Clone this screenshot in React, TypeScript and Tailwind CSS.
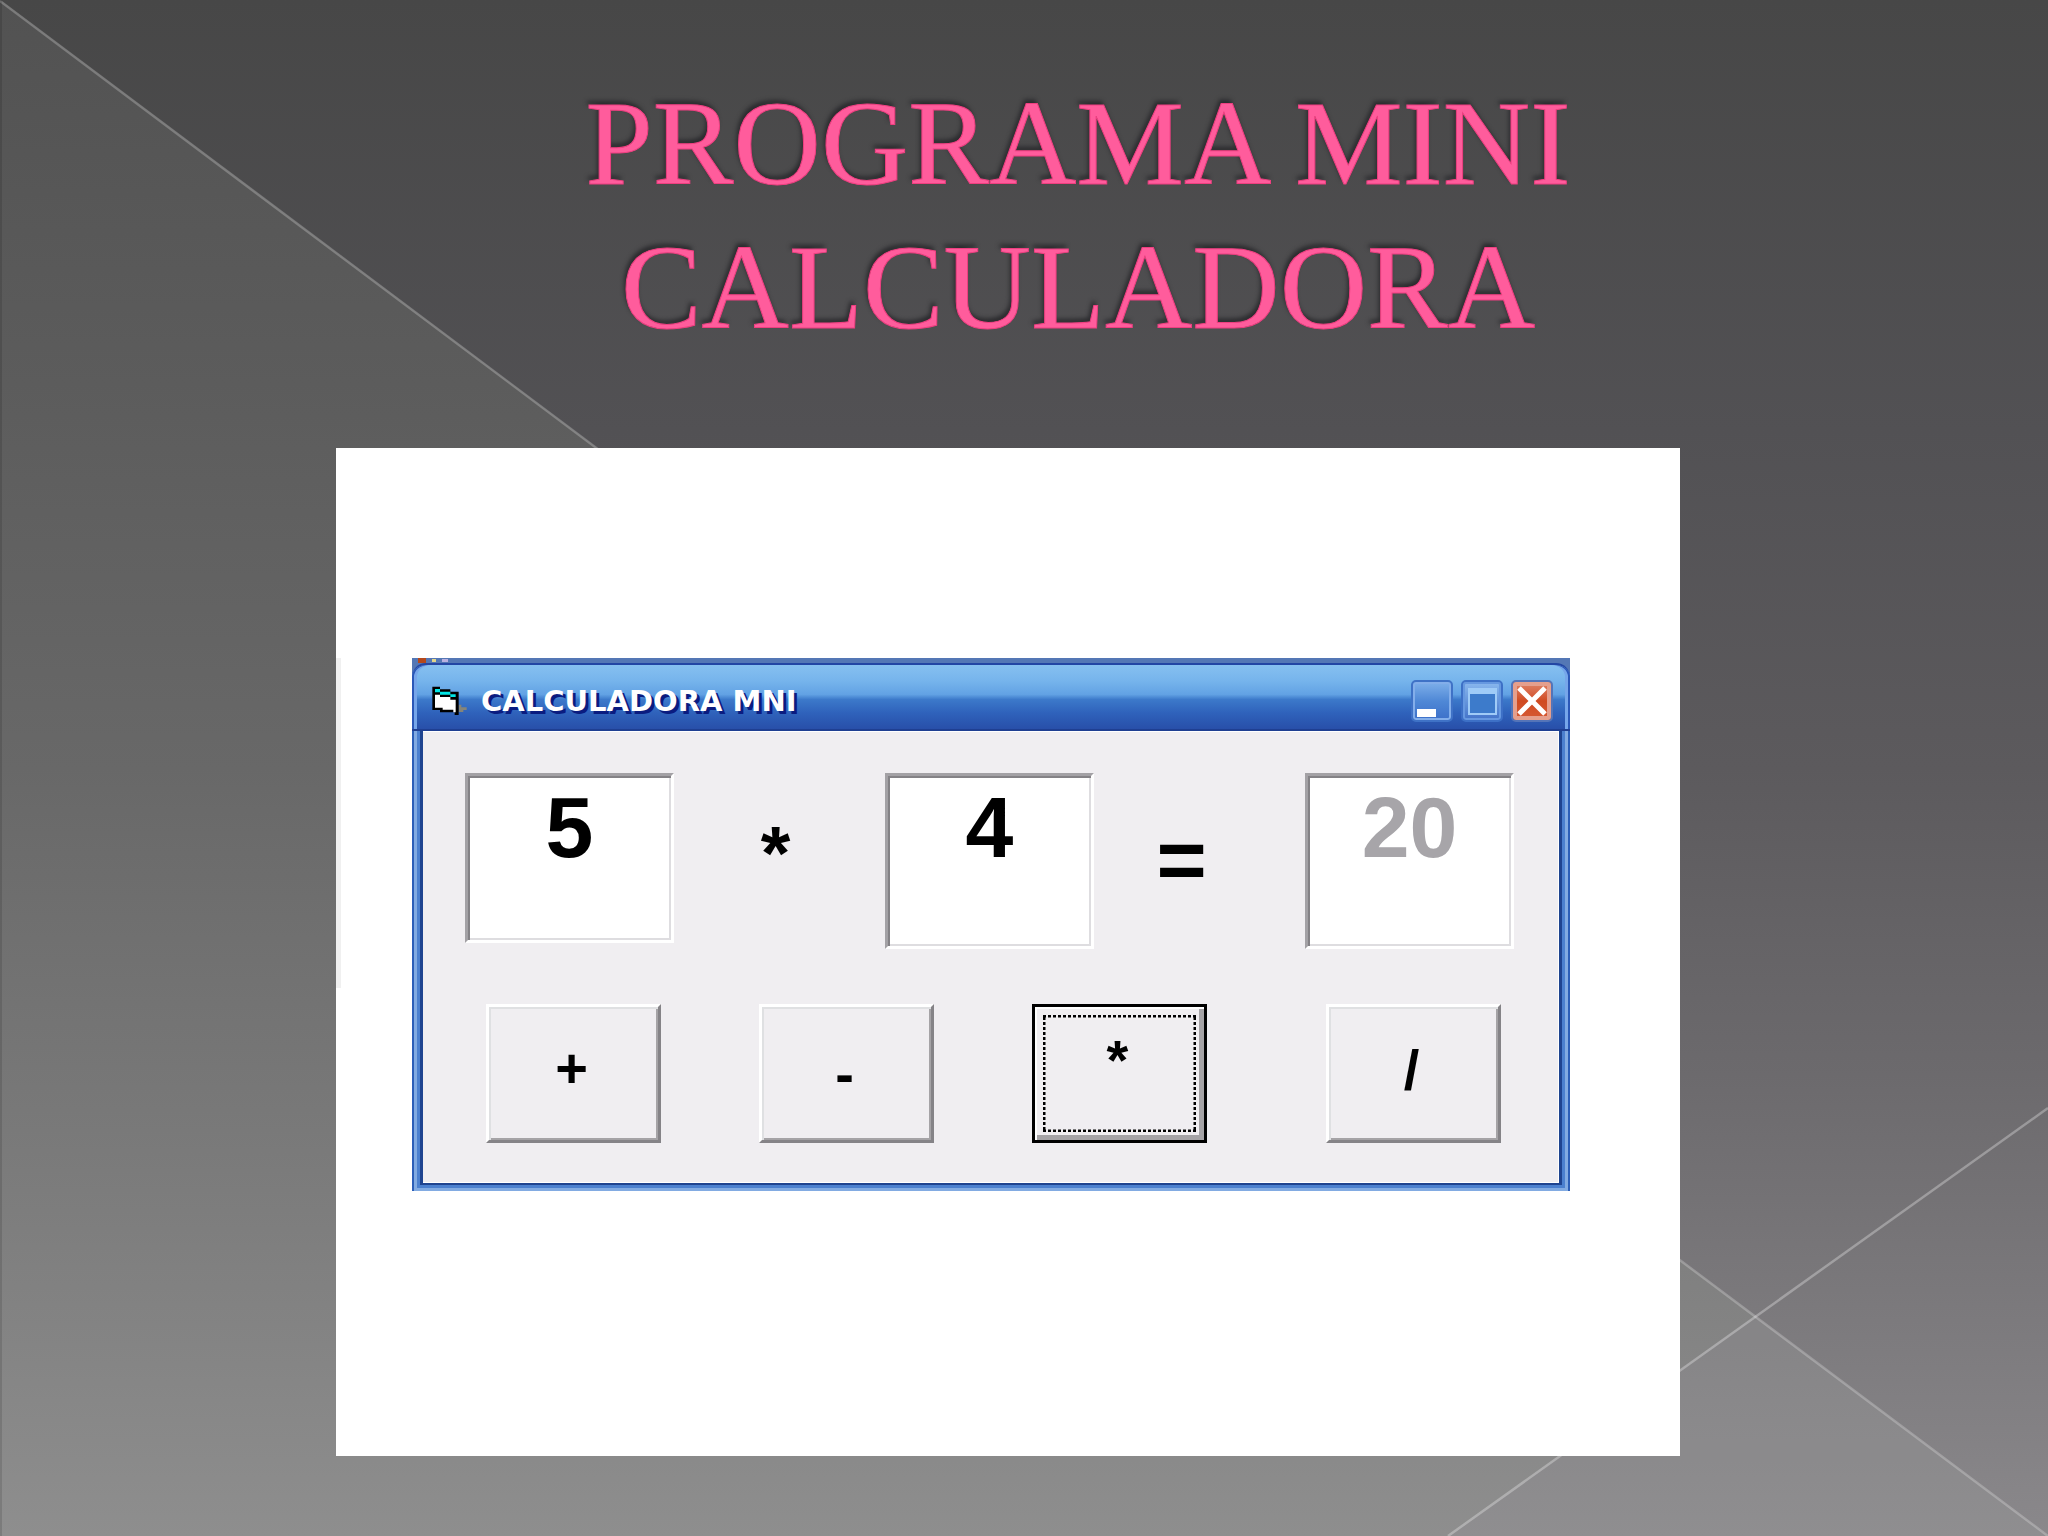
import { useState } from "react";

type Operator = "+" | "-" | "*" | "/";

const operators: { symbol: Operator; label: string; look: string }[] = [
  { symbol: "+", label: "Sumar", look: "col-start-1 pb-3" },
  { symbol: "-", label: "Restar", look: "col-start-3 pb-0" },
  { symbol: "*", label: "Multiplicar", look: "col-start-5 pb-7" },
  { symbol: "/", label: "Dividir", look: "col-start-7 pb-2" },
];

function calculate(a: number, b: number, operator: Operator): number {
  if (operator === "+") return a + b;
  if (operator === "-") return a - b;
  if (operator === "*") return a * b;
  return a / b;
}

function SlideBackground() {
  return (
    <svg
      className="absolute inset-0 h-full w-full"
      viewBox="0 0 2048 1536"
      preserveAspectRatio="none"
      aria-hidden="true"
    >
      <defs>
        <linearGradient id="upper" x1="0" y1="0" x2="0" y2="1536" gradientUnits="userSpaceOnUse">
          <stop offset="0" stopColor="#474747" />
          <stop offset="0.28" stopColor="#525154" />
          <stop offset="0.5" stopColor="#5c5a5d" />
          <stop offset="0.7" stopColor="#6c6a6d" />
          <stop offset="1" stopColor="#8a888b" />
        </linearGradient>
        <linearGradient id="lower" x1="0" y1="0" x2="0" y2="1536" gradientUnits="userSpaceOnUse">
          <stop offset="0" stopColor="#525252" />
          <stop offset="0.25" stopColor="#5c5c5c" />
          <stop offset="0.5" stopColor="#686868" />
          <stop offset="0.75" stopColor="#7a7a7a" />
          <stop offset="1" stopColor="#8e8e8e" />
        </linearGradient>
      </defs>
      <rect width="2048" height="1536" fill="url(#upper)" />
      <path d="M0 0L2048 1536H0Z" fill="url(#lower)" />
      <path d="M1448 1536L1755 1316L2048 1536Z" fill="#98909c" fillOpacity="0.16" />
      <path d="M0 1L2048 1536" stroke="#ffffff" strokeOpacity="0.24" strokeWidth="2.5" />
      <path d="M1448 1536L2048 1108" stroke="#ffffff" strokeOpacity="0.3" strokeWidth="2.5" />
      <path d="M1 0V1536" stroke="#000000" strokeOpacity="0.12" strokeWidth="2" />
    </svg>
  );
}

function FormIcon() {
  return (
    <svg className="h-[30px] w-[35px] shrink-0" viewBox="98 138 105 90" aria-hidden="true">
      <path d="M178 194h8v8h16v8h-10v6h-14z" fill="#85857a" />
      <path d="M99 140h23v8h31v7h25v70h-12v-8h-44v-7h-23z" fill="#000000" />
      <path d="M107 164h15v7h31v8h16v38h-7v-8h-32v-6h-23z" fill="#ffffff" />
      <path d="M107 147h15v8h31v8h16v8h-16v-7h-31v-7h-15z" fill="#00e5e5" />
    </svg>
  );
}

function CaptionButtons() {
  return (
    <div className="flex gap-2">
      <button
        type="button"
        aria-label="Minimizar"
        className="flex h-[42px] w-[42px] items-end rounded-[5px] border-2 border-[#3f72c6] bg-linear-to-b from-[#7fb0ea] via-[#4f88d6] to-[#3d70c9] pb-[3px] pl-[4px] shadow-[inset_0_0_0_2px_#83aeea]"
      >
        <span className="h-[8px] w-[19px] bg-white" />
      </button>
      <button
        type="button"
        aria-label="Maximizar"
        className="flex h-[42px] w-[42px] items-center justify-center rounded-[5px] border-2 border-[#3d70c6] bg-linear-to-b from-[#8ab8ee] to-[#4373c9] shadow-[inset_0_0_0_2px_#6698e0]"
      >
        <span className="h-[27px] w-[29px] border-2 border-t-[6px] border-[#9fcbf7] bg-[#3d7bcb]" />
      </button>
      <button
        type="button"
        aria-label="Cerrar"
        className="flex h-[42px] w-[42px] items-center justify-center rounded-[5px] border-2 border-[#5474b8] bg-linear-to-b from-[#e08468] via-[#d04a20] to-[#d65a35] shadow-[inset_0_0_0_4px_#e59f8d]"
      >
        <svg className="h-[30px] w-[30px]" viewBox="0 0 30 30" aria-hidden="true">
          <path d="M2 2L28 28M28 2L2 28" stroke="#ffffff" strokeWidth="5" />
        </svg>
      </button>
    </div>
  );
}

const fieldClass =
  "w-full rounded-none border-[3px] border-t-[#a3a1a5] border-r-white border-b-white border-l-[#a3a1a5] bg-white text-center text-[86px] leading-[96px] font-bold shadow-[inset_2px_2px_#848286,inset_-2px_-2px_#dedde0] outline-none";

function Calculator() {
  const [first, setFirst] = useState("5");
  const [second, setSecond] = useState("4");
  const [operator, setOperator] = useState<Operator>("*");
  const result = calculate(Number(first), Number(second), operator);

  return (
    <section className="font-['Liberation_Sans',Arial,sans-serif]" aria-label="Calculadora">
      <div className="relative bg-[#5477b5] pt-[5px]">
        <div className="absolute top-0 left-[6px] flex gap-[6px]" aria-hidden="true">
          <span className="h-[5px] w-[8px] bg-[#b4481c]" />
          <span className="mt-[1px] h-[3px] w-[4px] bg-[#e2d58a]" />
          <span className="mt-[1px] h-[3px] w-[6px] bg-[#b9b0e0]" />
        </div>
        <header className="relative flex h-[68px] items-center rounded-t-[14px] border-t-2 border-b-2 border-t-[#2346a4] border-b-[#1f3f92] bg-[linear-gradient(to_bottom,#86c0f0_0%,#76b4ec_25%,#62a2e4_46%,#3c79ca_54%,#2f62bb_75%,#284fa9_100%)] pt-[8px] pr-[17px] pl-[20px] shadow-[inset_2px_0_#2b58b8,inset_-2px_0_#2b58b8,inset_5px_0_#76a6ea,inset_-5px_0_#76a6ea]">
          <FormIcon />
          <h2 className="ml-[14px] flex-1 font-['DejaVu_Sans',sans-serif] text-[29px] leading-8 font-bold text-white [text-shadow:3px_3px_0_#0a1c80]">
            CALCULADORA MNI
          </h2>
          <CaptionButtons />
        </header>
      </div>
      <div className="px-[11px] pb-[8px] shadow-[inset_2px_0_#2c5fb8,inset_-2px_0_#2c5fb8,inset_5px_-3px_#82abe2,inset_-5px_-3px_#82abe2,inset_8px_-6px_#4b80cf,inset_-8px_-6px_#4b80cf,inset_11px_-8px_#1f4490,inset_-11px_-8px_#1f4490]">
        <div className="border border-l-0 border-white bg-[#f0eef1] pt-[41px] pb-[39px]">
          <div className="grid grid-cols-[209fr_211fr_209fr_211fr_209fr] items-start pr-[44px] pl-[42px]">
            <input
              aria-label="Primer número"
              value={first}
              onChange={(e) => setFirst(e.target.value)}
              className={fieldClass + " h-[170px] pb-[62px] text-black"}
            />
            <span className="pt-[32px] pr-2 text-center text-[76px] leading-[96px] font-bold">{operator}</span>
            <input
              aria-label="Segundo número"
              value={second}
              onChange={(e) => setSecond(e.target.value)}
              className={fieldClass + " h-[176px] pb-[68px] text-black"}
            />
            <span className="pt-[38px] pr-9 text-center text-[86px] leading-[96px] font-bold">=</span>
            <input
              aria-label="Resultado"
              value={String(result)}
              disabled
              className={fieldClass + " h-[176px] pb-[68px] text-[#a7a5a9]"}
            />
          </div>
          <div className="mt-[55px] grid grid-cols-[175fr_98fr_175fr_98fr_175fr_119fr_175fr] pr-[57px] pl-[63px]">
            {operators.map(({ symbol, label, look }) => {
              const base =
                "relative h-[139px] border-[3px] pr-1 text-[56px] leading-[64px] font-bold text-black outline-none ";
              const bevel =
                symbol === operator
                  ? " border-black shadow-[inset_2px_2px_#ffffff,inset_-5px_-5px_#a5a3a6]"
                  : " border-t-white border-r-[#858387] border-b-[#858387] border-l-white shadow-[inset_2px_2px_#dfe0e2,inset_-2px_-2px_#a5a3a6]";
              return (
                <button
                  key={symbol}
                  type="button"
                  aria-label={label}
                  onClick={() => setOperator(symbol)}
                  className={base + look + bevel}
                >
                  {symbol}
                  {symbol === operator && (
                    <svg className="absolute inset-[8px] h-[117px] w-[calc(100%-16px)]" aria-hidden="true">
                      <rect
                        width="100%"
                        height="100%"
                        fill="none"
                        stroke="#000000"
                        strokeWidth="5"
                        strokeDasharray="3 2"
                      />
                    </svg>
                  )}
                </button>
              );
            })}
          </div>
        </div>
      </div>
    </section>
  );
}

export default function App() {
  return (
    <div className="relative min-h-screen overflow-hidden">
      <SlideBackground />
      <main className="relative flex flex-col pt-[71px] pr-[368px] pb-[80px] pl-[336px]">
        <h1 className="pl-[140px] text-center font-['Liberation_Serif',serif] text-[121px] leading-[144px] text-[#ff5c9c] [-webkit-text-stroke:1px_#ee3f80] [text-shadow:-2px_-4px_4px_#2b2b2e]">
          PROGRAMA MINI
          <br />
          CALCULADORA
        </h1>
        <div className="relative mt-[89px] bg-white pt-[210px] pr-[110px] pb-[265px] pl-[76px]">
          <span className="absolute top-[210px] left-0 h-[330px] w-[5px] bg-[#f0f0f0]" aria-hidden="true" />
          <Calculator />
        </div>
      </main>
    </div>
  );
}
